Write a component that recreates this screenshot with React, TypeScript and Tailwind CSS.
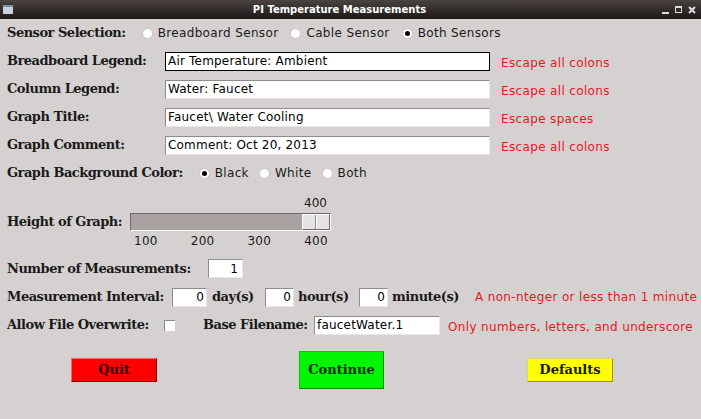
import React from "react";

const serif = { fontFamily: '"DejaVu Serif", "Liberation Serif", serif' };
const sans = { fontFamily: '"DejaVu Sans", "Liberation Sans", sans-serif' };

function Label({ children, className = "" }: { children: React.ReactNode; className?: string }) {
  return (
    <span className={`font-bold text-[13px] text-[#1a1a1a] whitespace-nowrap tracking-[-0.5px] ${className}`} style={serif}>
      {children}
    </span>
  );
}

function Radio({ checked, label }: { checked?: boolean; label: string }) {
  return (
    <span className="flex items-center gap-[5px]">
      <span className="w-[11px] h-[11px] rounded-full bg-white border border-[#c8c4c4] flex items-center justify-center">
        {checked && <span className="w-[5px] h-[5px] rounded-full bg-black" />}
      </span>
      <span className="text-[12px] tracking-[0.35px] text-[#1a1a1a] whitespace-nowrap" style={sans}>{label}</span>
    </span>
  );
}

function Input({ value, className = "", focused = false, right = false }: { value: string; className?: string; focused?: boolean; right?: boolean }) {
  return (
    <div
      className={`h-[19px] bg-white flex items-center px-[2px] text-[12px] tracking-[0.2px] text-black whitespace-nowrap overflow-hidden ${
        focused ? "border border-black" : "border-t border-l border-[#8f8b8b] border-r border-b border-r-[#e8e6e6] border-b-[#e8e6e6]"
      } ${right ? "justify-end" : ""} ${className}`}
      style={sans}
    >
      {value}
    </div>
  );
}

function Red({ children }: { children: React.ReactNode }) {
  return (
    <span className="text-[12px] tracking-[0.35px] text-[#e8161c] whitespace-nowrap" style={sans}>
      {children}
    </span>
  );
}

export default function App() {
  return (
    <div className="w-[701px] h-[419px] bg-[#d5d1d1] overflow-hidden flex flex-col">
      {/* Title bar */}
      <div className="h-[19px] bg-gradient-to-b from-[#4a4340] to-[#1d1917] flex items-center relative shrink-0">
        <div className="ml-[3px] w-[10px] h-[9px] bg-[#c7d0dc] border-t-[2px] border-[#7e8fa8]" />
        <div className="flex-1 text-center text-white font-bold text-[10px] pl-[4px]" style={sans}>
          PI Temperature Measurements
        </div>
        <div className="flex items-center gap-[6px] mr-[5px] text-[#e0dcdc]">
          <span className="w-[7px] h-[2px] bg-[#e0dcdc] mt-[6px]" />
          <span className="w-[7px] h-[7px] border border-[#e0dcdc] border-t-[2px]" />
          <svg width="8" height="8" viewBox="0 0 8 8">
            <path d="M1 1 L7 7 M7 1 L1 7" stroke="#e0dcdc" strokeWidth="2" />
          </svg>
        </div>
      </div>

      {/* Sensor selection */}
      <div className="h-[28px] flex items-center pl-[7px]">
        <Label>Sensor Selection:</Label>
        <div className="flex items-center ml-[16px] gap-[12px]">
          <Radio label="Breadboard Sensor" />
          <Radio label="Cable Sensor" />
          <Radio checked label="Both Sensors" />
        </div>
      </div>

      {[
        ["Breadboard Legend:", "Air Temperature: Ambient", "Escape all colons", true],
        ["Column Legend:", "Water: Faucet", "Escape all colons", false],
        ["Graph Title:", "Faucet\\ Water Cooling", "Escape spaces", false],
        ["Graph Comment:", "Comment: Oct 20, 2013", "Escape all colons", false],
      ].map(([l, v, r, f]) => (
        <div key={l as string} className="h-[28px] flex items-center pl-[7px]">
          <Label className="w-[158px]">{l}</Label>
          <Input value={v as string} focused={f as boolean} className="w-[325px]" />
          <span className="ml-[11px]"><Red>{r}</Red></span>
        </div>
      ))}

      {/* Graph background */}
      <div className="h-[28px] flex items-center pl-[7px]">
        <Label>Graph Background Color:</Label>
        <div className="flex items-center ml-[16px] gap-[10px]">
          <Radio checked label="Black" />
          <Radio label="White" />
          <Radio label="Both" />
        </div>
      </div>

      {/* Height slider */}
      <div className="h-[67px] flex items-start pl-[7px]">
        <Label className="w-[123px] mt-[25px]">Height of Graph:</Label>
        <div className="flex flex-col w-[201px] mt-[9px]">
          <div className="flex justify-end pr-[4px] text-[12px] text-[#1a1a1a] h-[15px] leading-[15px]" style={sans}>400</div>
          <div className="h-[18px] mt-[2px] bg-[#aaa2a1] border-t border-l border-[#6f6a69] border-r border-b border-r-white border-b-white flex justify-end items-stretch">
            <div className="w-[28px] flex border-t border-l border-white border-r border-b border-r-[#6f6a69] border-b-[#6f6a69] bg-[#e6e3e3]">
              <div className="flex-1 border-r border-[#8f8a8a]" />
              <div className="flex-1 border-l border-white" />
            </div>
          </div>
          <div className="flex justify-between pl-[4px] pr-[3px] text-[12px] tracking-[0.3px] text-[#1a1a1a] mt-[1px]" style={sans}>
            <span>100</span>
            <span>200</span>
            <span>300</span>
            <span>400</span>
          </div>
        </div>
      </div>

      {/* Number of measurements */}
      <div className="h-[29px] flex items-center pl-[7px]">
        <Label className="w-[201px]">Number of Measurements:</Label>
        <Input value="1" right className="w-[35px] pr-[4px]" />
      </div>

      {/* Measurement Interval */}
      <div className="h-[28px] flex items-center pl-[7px]">
        <Label className="w-[165px]">Measurement Interval:</Label>
        <Input value="0" right className="w-[35px] pr-[2px]" />
        <Label className="ml-[5px] w-[53px]">day(s)</Label>
        <Input value="0" right className="w-[29px] pr-[2px]" />
        <Label className="ml-[4px] w-[61px]">hour(s)</Label>
        <Input value="0" right className="w-[29px] pr-[2px]" />
        <Label className="ml-[4px] w-[83px]">minute(s)</Label>
        <Red>A non-nteger or less than 1 minute</Red>
      </div>

      {/* File overwrite */}
      <div className="h-[28px] flex items-center pl-[7px]">
        <Label className="w-[157px]">Allow File Overwrite:</Label>
        <span className="w-[11px] h-[11px] bg-white border-t border-l border-[#8f8b8b]" />
        <Label className="ml-[28px] w-[111px]">Base Filename:</Label>
        <Input value="faucetWater.1" className="w-[126px]" />
        <span className="ml-[8px]"><Red>Only numbers, letters, and underscore</Red></span>
      </div>

      {/* Buttons */}
      <div className="flex items-center mt-[12px] h-[38px]">
        <button
          className="ml-[71px] w-[86px] h-[24px] bg-[#ff0000] border border-[#ff6060] border-b-[#8a0000] border-r-[#8a0000] text-[13px] font-bold text-[#3a0000]"
          style={serif}
        >
          Quit
        </button>
        <button
          className="ml-[142px] w-[85px] h-[38px] bg-[#00f500] border border-[#00c800] border-b-[#008a00] border-r-[#008a00] text-[13px] font-bold text-[#0a2a0a]"
          style={serif}
        >
          Continue
        </button>
        <button
          className="ml-[143px] w-[86px] h-[24px] bg-[#ffff00] border border-[#e0d860] border-b-[#9a9400] border-r-[#9a9400] text-[13px] font-bold text-[#1a1a00]"
          style={serif}
        >
          Defaults
        </button>
      </div>
    </div>
  );
}
